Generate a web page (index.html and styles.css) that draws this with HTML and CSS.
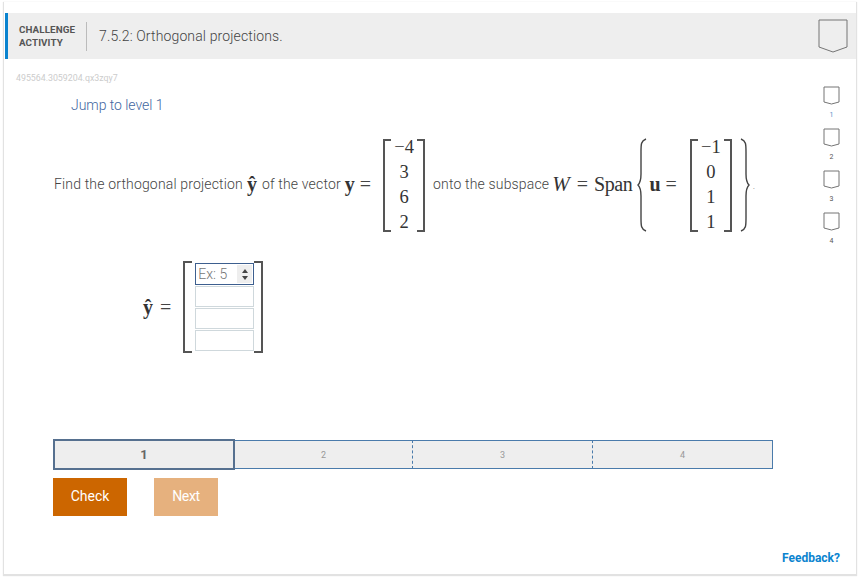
FILE: index.html
```html
<!DOCTYPE html>
<html lang="en">
<head>
<meta charset="utf-8">
<title>Challenge activity</title>
<link rel="stylesheet" href="styles.css">
</head>
<body>
<div class="card">
  <header class="head">
    <div class="label">CHALLENGE<br>ACTIVITY</div>
    <div class="title">7.5.2: Orthogonal projections.</div>
    <svg class="chev-big" viewBox="0 0 30 34"><path d="M1 1H29V28L15 33L1 28Z"/></svg>
  </header>
  <div class="body">
    <main class="main">
      <div class="uid">495564.3059204.qx3zqy7</div>
      <div class="jump">Jump to level 1</div>
      <div class="problem">
        <span class="t">Find the orthogonal projection</span>
        <b class="m hat">ŷ</b>
        <span class="t">of the vector</span>
        <b class="m y">y</b>
        <span class="m eq">=</span>
        <div class="matrix">
          <span>−4</span><span>3</span><span>6</span><span>2</span>
        </div>
        <span class="t onto">onto the subspace</span>
        <i class="m w">W</i>
        <span class="m eq e2">=</span>
        <span class="m span">Span</span>
        <svg class="brace" viewBox="0 0 10 94"><path d="M9 1C4 3 4 6 4 14V36C4 42 3 45 1 47C3 49 4 52 4 58V80C4 88 4 91 9 93"/></svg>
        <b class="m u">u</b>
        <span class="m eq e3">=</span>
        <div class="matrix m2">
          <span>−1</span><span>0</span><span>1</span><span>1</span>
        </div>
        <svg class="brace rb" viewBox="0 0 10 94"><path d="M1 1C6 3 6 6 6 14V36C6 42 7 45 9 47C7 49 6 52 6 58V80C6 88 6 91 1 93"/></svg>
        <span class="t dot">.</span>
      </div>
      <div class="answer">
        <b class="m hat">ŷ</b>
        <span class="m eq">=</span>
        <div class="inputs">
          <div class="field active"><span class="ph">Ex: 5</span><span class="spin"><i class="up"></i><i class="down"></i></span></div>
          <div class="field"></div>
          <div class="field"></div>
          <div class="field"></div>
        </div>
      </div>
      <div class="levels">
        <div class="lv cur">1</div>
        <div class="lv two">2</div>
        <div class="lv dash">3</div>
        <div class="lv dash">4</div>
      </div>
      <div class="btns">
        <button class="btn check">Check</button>
        <button class="btn next">Next</button>
      </div>
    </main>
    <aside class="side">
      <div class="step"><svg viewBox="0 0 17 19"><path d="M1 1H16V16L8.5 18L1 16Z"/></svg><span class="n1">1</span></div>
      <div class="step"><svg viewBox="0 0 17 19"><path d="M1 1H16V16L8.5 18L1 16Z"/></svg><span>2</span></div>
      <div class="step"><svg viewBox="0 0 17 19"><path d="M1 1H16V16L8.5 18L1 16Z"/></svg><span>3</span></div>
      <div class="step"><svg viewBox="0 0 17 19"><path d="M1 1H16V16L8.5 18L1 16Z"/></svg><span>4</span></div>
    </aside>
  </div>
  <footer class="foot"><a class="fb">Feedback?</a></footer>
</div>
</body>
</html>
```

FILE: styles.css
```css
* { box-sizing: border-box; }
html, body { margin: 0; padding: 0; background: #fff; }
body { width: 862px; height: 577px; overflow: hidden; font-family: Roboto, sans-serif; color: #666; }
.card {
  width: 852px; height: 572px; margin: 2px 0 0 4px; padding-top: 11px;
  display: flex; flex-direction: column; background: #fff;
  box-shadow: 0 1px 1px 1px #e2e2e2;
}
.head {
  height: 46px; margin-left: 1px; display: flex; align-items: center;
  background: #eee; border-left: 3px solid #0a83cf; padding-left: 11px;
}
.label { font-size: 9.8px; font-weight: 700; line-height: 13.5px; color: #555; letter-spacing: .1px; width: 67px; }
.title { height: 29px; line-height: 29px; border-left: 1px solid #bbb; padding-left: 12px; font-size: 14px; font-weight: 300; color: #444; letter-spacing: .13px; flex: 1; }
.chev-big { width: 30px; height: 34px; margin-right: 8px; }
svg path { fill: none; stroke: #757575; stroke-width: 1; }
.body { flex: 1; display: flex; min-height: 0; }
.main { flex: 1; min-width: 0; padding-left: 12px; }
.uid { margin-top: 14px; font-size: 8.8px; line-height: 10px; color: #ccc; }
.jump { margin: 13px 0 0 55px; font-size: 14px; font-weight: 300; line-height: 18px; color: #3f66a0; letter-spacing: -.05px; }
.problem { display: flex; align-items: center; margin: 24px 0 0 38px; height: 94px; white-space: nowrap; }
.t { font-size: 14px; font-weight: 300; color: #444; letter-spacing: .16px; margin-bottom: 2px; }
.m { font-family: "Liberation Serif", serif; font-size: 20px; color: #333; }
.problem .m { margin-bottom: 2px; }
.problem .hat { margin: 0 5px 2px 4px; }
.problem .y { margin: 0 5px 2px 4px; }
.eq { margin: 0 12px 0 0; color: #444; }
.matrix {
  position: relative; width: 42px; height: 94px; display: flex; flex-direction: column;
  align-items: center; justify-content: center;
  font-family: "Liberation Serif", serif; font-size: 18.5px; line-height: 25px; color: #333;
}
.matrix span { flex: none; }
.matrix::before, .matrix::after {
  content: ""; position: absolute; top: 1px; bottom: 0; width: 6px;
  border: 2px solid #555;
}
.matrix::before { left: 0; border-right: 0; }
.matrix::after { right: 0; border-left: 0; }
.onto { margin-left: 8px; }
.problem .w { margin: 0 7px 2px 3px; font-size: 21px; }
.problem .e2 { margin-right: 6px; }
.problem .span { margin-right: 5px; letter-spacing: -.4px; }
.brace { width: 10px; height: 94px; flex: none; }
.brace path { stroke: #444; stroke-width: 1.4; }
.problem .u { margin: 0 5px 2px 2px; }
.problem .e3 { margin-right: 13px; }
.m2 { margin-right: 8px; }
.dot { margin-left: 3px; color: #888; font-size: 10px; margin-bottom: 0; }
.answer { display: flex; align-items: center; height: 92px; margin: 29px 0 0 127px; }
.answer .hat { margin-right: 7px; }
.answer .eq { margin-right: 12px; }
.inputs {
  position: relative; width: 80px; height: 92px; padding: 2px 9px 0 12px;
  display: flex; flex-direction: column; gap: 1px;
}
.inputs::before, .inputs::after {
  content: ""; position: absolute; top: 0; bottom: 0; width: 7px; border: 2px solid #555;
}
.inputs::before { left: 0; border-right: 0; }
.inputs::after { right: 0; border-left: 0; }
.field { height: 21px; border: 1px solid #cfd8dc; display: flex; align-items: center; justify-content: space-between; font-size: 14px; font-weight: 300; color: #8a8a8a; }
.field.active { height: 22px; border-color: #3d5f8f; padding-left: 2px; }
.ph { color: #777; }
.spin { width: 15px; height: 18px; background: #eee; margin-right: 1px; display: flex; flex-direction: column; align-items: center; justify-content: center; gap: 3px; }
.spin i { display: block; width: 0; height: 0; border-left: 3.5px solid transparent; border-right: 3.5px solid transparent; }
.up { border-bottom: 4px solid #444; }
.down { border-top: 4px solid #444; }
.levels { display: flex; width: 720px; height: 29px; margin: 87px 0 0 37px; align-items: stretch; }
.lv {
  display: flex; align-items: center; justify-content: center; font-size: 9px; color: #999;
  background: #eee; width: 180px; border-top: 1px solid #4a7bab; border-bottom: 1px solid #4a7bab;
}
.lv.cur { width: 182px; height: 31px; margin-top: -1px; border: 2px solid #56708f; font-size: 13px; font-weight: 700; color: #666; }
.lv.two { width: 177px; }
.lv.dash { border-left: 1px dashed #4a7bab; }
.lv:last-child { border-right: 1px solid #4a7bab; flex: 1; }
.btns { display: flex; gap: 27px; margin: 9px 0 0 37px; }
.btn { height: 38px; border: 0; padding: 0 0 2px; color: #fff; font-family: Roboto, sans-serif; font-size: 14px; letter-spacing: -.3px; }
.check { width: 74px; background: #cc6600; letter-spacing: 0; }
.next { width: 64px; background: #e6b17e; }
.side { width: 33px; padding-top: 27px; display: flex; flex-direction: column; flex: none; }
.step { height: 42px; width: 17px; display: flex; flex-direction: column; align-items: center; }
.step svg { width: 17px; height: 19px; flex: none; }
.step span { font-size: 7px; line-height: 8px; margin-top: 6px; color: #555; }
.step .n1 { color: #5b8fc7; }
.foot { height: 27px; padding-right: 16px; text-align: right; }
.fb { font-size: 12px; font-weight: 700; color: #0a83cf; line-height: 14px; }
```
